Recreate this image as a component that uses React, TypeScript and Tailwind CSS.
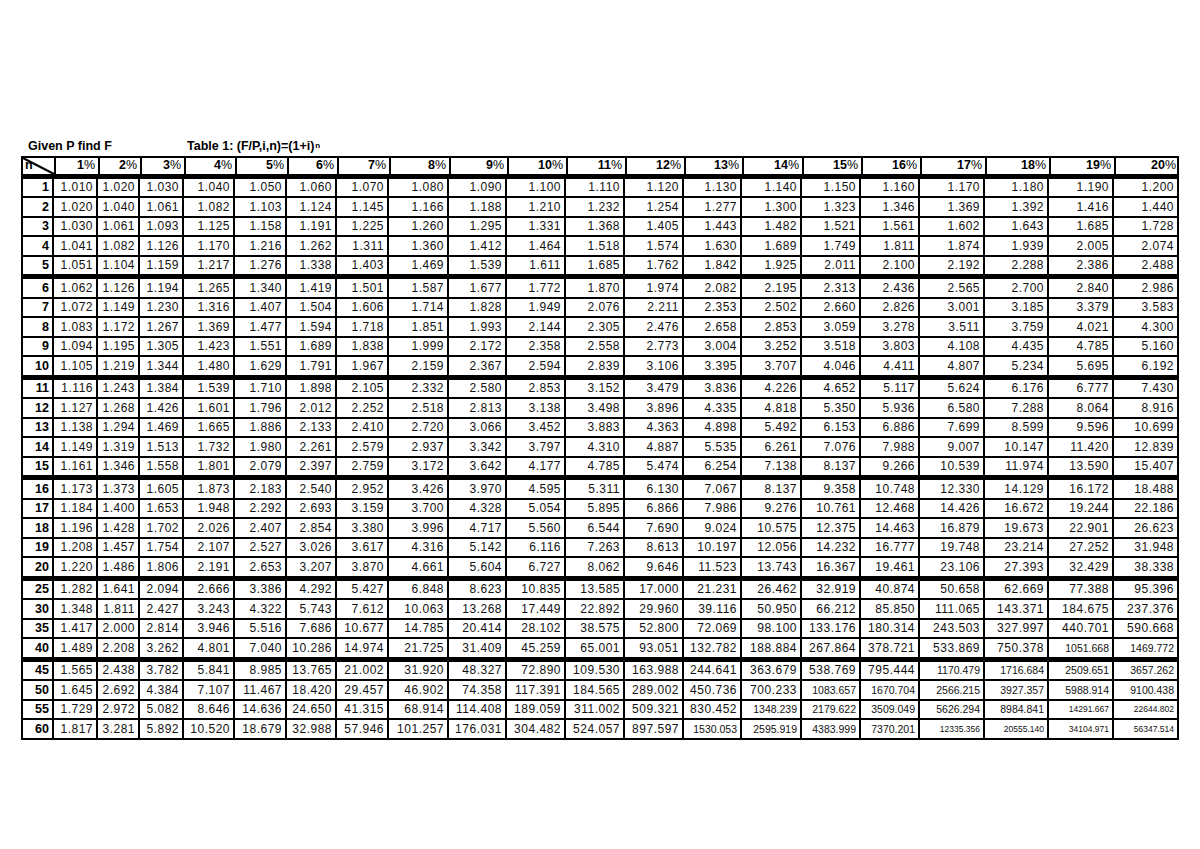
import React from "react";

// column widths measured off the sheet (each includes its left rule)
const rates = [
  { r: 1, w: "w-[44px]" },
  { r: 2, w: "w-[42px]" },
  { r: 3, w: "w-[44px]" },
  { r: 4, w: "w-[51px]" },
  { r: 5, w: "w-[52px]" },
  { r: 6, w: "w-[50px]" },
  { r: 7, w: "w-[52px]" },
  { r: 8, w: "w-[60px]" },
  { r: 9, w: "w-[58px]" },
  { r: 10, w: "w-[59px]" },
  { r: 11, w: "w-[59px]" },
  { r: 12, w: "w-[59px]" },
  { r: 13, w: "w-[58px]" },
  { r: 14, w: "w-[60px]" },
  { r: 15, w: "w-[59px]" },
  { r: 16, w: "w-[59px]" },
  { r: 17, w: "w-[65px]" },
  { r: 18, w: "w-[64px]" },
  { r: 19, w: "w-[65px]" },
  { r: 20, w: "w-[65px]" },
];

const periods = [1, 2, 3, 4, 5, 6, 7, 8, 9, 10, 11, 12, 13, 14, 15, 16, 17, 18, 19, 20, 25, 30, 35, 40, 45, 50, 55, 60];

// rows that open a new block get the heavy rule on top
const groupStarts = [1, 6, 11, 16, 25, 45];

// round half up like excel does (1.15^2 = 1.3225 -> 1.323)
const factor = (r: number, n: number) => {
  const x = Math.pow(1 + r / 100, n) * 1000;
  return (Math.round(Number(x.toPrecision(12))) / 1000).toFixed(3);
};

// excel shrinks the long numbers to fit
const sizeFor = (v: string) => {
  const whole = v.split(".")[0].length;
  if (whole >= 5) return "text-[8.5px]";
  if (whole === 4) return "text-[10.5px]";
  return "text-[12px] tracking-[0.5px]";
};

const NCell = () => (
  <div className="relative w-[31px] shrink-0">
    <svg className="absolute inset-0 h-full w-full" viewBox="0 0 31 16" preserveAspectRatio="none">
      <line x1="0" y1="0" x2="31" y2="16" stroke="#000" strokeWidth="2.2" />
    </svg>
    <span className="absolute left-[2px] top-[1px] text-[12.5px] font-bold leading-[13px]">n</span>
  </div>
);

const App = () => {
  return (
    <div className="h-[849px] w-[1200px] bg-white pl-[21px] pt-[138px] text-black" style={{ fontFamily: '"Liberation Sans", Arial, sans-serif' }}>
      <div className="flex h-[17.5px] items-center text-[12.5px] font-bold">
        <span className="ml-[7px] w-[159px]">Given P find F</span>
        <span>
          Table 1: (F/P,i,n)=(1+i)
          <sup className="relative top-[-2px] ml-[1px] text-[8px]">n</sup>
        </span>
      </div>

      <div className="w-[1158px] border-b-2 border-r-2 border-black">
        {/* header row */}
        <div className="flex h-[18px] border-t-2 border-black">
          <div className="flex shrink-0 border-l-2 border-black">
            <NCell />
          </div>
          {rates.map((c) => (
            <div
              key={c.r}
              className={`${c.w} flex shrink-0 items-center justify-end border-l-2 border-black pr-[3px] text-[12.5px] font-bold leading-none`}
            >
              {c.r}
              <span className="font-normal">%</span>
            </div>
          ))}
        </div>

        {periods.map((n) => (
          <div
            key={n}
            className={
              groupStarts.includes(n)
                ? "flex h-[22.5px] border-t-[5px] border-black"
                : "flex h-[19.5px] border-t-2 border-black"
            }
          >
            <div className="flex w-[31px] shrink-0 items-center justify-end border-l-2 border-black pr-[3px] text-[12.5px] font-bold leading-none">
              {n}
            </div>
            {rates.map((c) => {
              const v = factor(c.r, n);
              return (
                <div
                  key={c.r}
                  className={`${c.w} ${sizeFor(v)} flex shrink-0 items-center justify-end border-l-2 border-black pr-[3px] leading-none text-[#111]`}
                >
                  {v}
                </div>
              );
            })}
          </div>
        ))}
      </div>
    </div>
  );
};

export default App;
